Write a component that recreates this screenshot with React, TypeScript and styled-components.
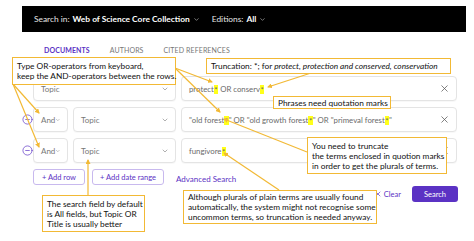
import React from 'react';
import styled, { createGlobalStyle } from 'styled-components';
import { ChevronDown, X, CircleMinus } from 'lucide-react';

const PURPLE = '#5b32c4';
const GOLD = '#f2b935';

const Global = createGlobalStyle`
  html, body { margin: 0; padding: 0; background: #fff; }
  body { font-family: Lato, "Open Sans", sans-serif; }
`;

const Page = styled.div`
  position: relative;
  width: 474px;
  height: 241px;
  overflow: hidden;
  padding-top: 6px;
  box-sizing: border-box;
  background: #fff;
`;

const TopBar = styled.div`
  margin-left: 22px;
  width: 444px;
  height: 26px;
  background: #000;
  color: #e6e6e6;
  display: flex;
  align-items: center;
  padding-left: 12px;
  box-sizing: border-box;
  font-size: 8.4px;
  gap: 12px;
  b { color: #fff; font-weight: 700; }
`;

const BarGroup = styled.span`
  display: inline-flex;
  align-items: center;
  gap: 3px;
`;

const Tabs = styled.div`
  margin-top: 11px;
  height: 14px;
  padding-left: 44px;
  display: flex;
  align-items: center;
  gap: 20px;
  font-size: 7px;
  letter-spacing: 0.1px;
`;

const Tab = styled.span<{ $active?: boolean }>`
  color: ${p => (p.$active ? PURPLE : '#777')};
  font-weight: ${p => (p.$active ? 700 : 400)};
`;

const Form = styled.div`
  margin-top: 19px;
  display: flex;
  flex-direction: column;
  gap: 6px;
`;

const Row = styled.div`
  display: flex;
  align-items: center;
  height: 25px;
  padding-left: 22px;
`;

const IconSlot = styled.div`
  width: 11px;
  display: flex;
  align-items: center;
  justify-content: center;
  color: ${PURPLE};
`;

const Fields = styled.div`
  display: flex;
  gap: 5px;
`;

const Field = styled.div<{ $w: number }>`
  width: ${p => p.$w}px;
  height: 25px;
  box-sizing: border-box;
  border: 1px solid #e4e4e4;
  border-radius: 4px;
  background: #fff;
  display: flex;
  align-items: center;
  justify-content: space-between;
  padding: 0 6px 0 7px;
  font-size: 8px;
  color: #777;
  box-shadow: 0 1px 1px rgba(0,0,0,0.03);
`;

const Query = styled.span`
  color: #6a6a6a;
  white-space: nowrap;
  font-size: 7.8px;
`;

const Mark = styled.mark`
  display: inline-block;
  background: #ffff1a;
  color: inherit;
  padding: 0 0.5px;
  height: 9px;
  line-height: 10px;
  vertical-align: -1px;
`;

const Buttons = styled.div`
  margin-top: 6px;
  padding-left: 33px;
  display: flex;
  align-items: center;
  gap: 7px;
  height: 16px;
`;

const OutlineBtn = styled.div<{ $w: number }>`
  width: ${p => p.$w}px;
  height: 16px;
  box-sizing: border-box;
  border: 1px solid #c8b9ee;
  border-radius: 3px;
  color: ${PURPLE};
  font-size: 7.5px;
  display: flex;
  align-items: center;
  justify-content: center;
  gap: 2px;
`;

const LinkText = styled.span`
  margin-left: 5px;
  color: ${PURPLE};
  font-size: 8px;
  padding-top: 3px;
`;

const Actions = styled.div`
  margin-top: 1px;
  display: flex;
  justify-content: flex-end;
  align-items: center;
  gap: 11px;
  padding-right: 16px;
  height: 16px;
`;

const ClearLink = styled.span`
  color: ${PURPLE};
  font-size: 7.5px;
  display: inline-flex;
  align-items: center;
  gap: 2px;
`;

const SearchBtn = styled.div`
  width: 46px;
  height: 16px;
  border-radius: 3px;
  background: ${PURPLE};
  color: #fff;
  font-size: 7.5px;
  display: flex;
  align-items: center;
  justify-content: center;
`;

const Lines = styled.svg`
  position: absolute;
  left: 0;
  top: 0;
  pointer-events: none;
`;

const Callout = styled.div<{ $x: number; $y: number; $w: number; $h: number }>`
  position: absolute;
  left: ${p => p.$x}px;
  top: ${p => p.$y}px;
  width: ${p => p.$w}px;
  height: ${p => p.$h}px;
  box-sizing: border-box;
  border: 1.5px solid ${GOLD};
  background: #fff;
  color: #111;
  font-family: Lato, "Open Sans", sans-serif;
  font-size: 8.3px;
  line-height: 10px;
  padding: 2px 4px;
  white-space: nowrap;
  display: flex;
  flex-direction: column;
  justify-content: center;
  i { font-style: italic; }
`;

const Chev = () => <ChevronDown size={8} strokeWidth={2} color="#888" />;

const lines: [number, number, number, number][] = [
  [13, 84, 39, 113],
  [13, 84, 39, 147],
  [175, 68, 212, 82],
  [175, 68, 220, 112],
  [311, 73, 268, 87],
  [307, 152, 224, 119],
  [279, 190, 224, 153],
  [88, 195, 88, 160],
];

export default function App() {
  return (
    <Page>
      <Global />
      <TopBar>
        <BarGroup>
          Search in: <b>Web of Science Core Collection</b>
          <ChevronDown size={7} color="#ccc" />
        </BarGroup>
        <BarGroup>
          Editions: <b>All</b>
          <ChevronDown size={7} color="#ccc" />
        </BarGroup>
      </TopBar>
      <Tabs>
        <Tab $active>DOCUMENTS</Tab>
        <Tab>AUTHORS</Tab>
        <Tab>CITED REFERENCES</Tab>
      </Tabs>
      <Form>
        <Row>
          <IconSlot />
          <Fields>
            <Field $w={143}>Topic<Chev /></Field>
            <Field $w={276}>
              <Query>protect<Mark>*</Mark> OR conserv<Mark>*</Mark></Query>
              <X size={11} color="#555" strokeWidth={1.6} />
            </Field>
          </Fields>
        </Row>
        <Row>
          <IconSlot><CircleMinus size={11} strokeWidth={1.5} /></IconSlot>
          <Fields>
            <Field $w={35}>And<Chev /></Field>
            <Field $w={103}>Topic<Chev /></Field>
            <Field $w={276}>
              <Query>"old forest<Mark>*</Mark>" OR "old growth forest<Mark>*</Mark>" OR "primeval forest<Mark>*</Mark>"</Query>
              <X size={11} color="#555" strokeWidth={1.6} />
            </Field>
          </Fields>
        </Row>
        <Row>
          <IconSlot><CircleMinus size={11} strokeWidth={1.5} /></IconSlot>
          <Fields>
            <Field $w={35}>And<Chev /></Field>
            <Field $w={103}>Topic<Chev /></Field>
            <Field $w={276}>
              <Query>fungivore<Mark>*</Mark></Query>
              <X size={11} color="#555" strokeWidth={1.6} />
            </Field>
          </Fields>
        </Row>
      </Form>
      <Buttons>
        <OutlineBtn $w={52}>+ Add row</OutlineBtn>
        <OutlineBtn $w={72}>+ Add date range</OutlineBtn>
        <LinkText>Advanced Search</LinkText>
      </Buttons>
      <Actions>
        <ClearLink><X size={8} strokeWidth={2} /> Clear</ClearLink>
        <SearchBtn>Search</SearchBtn>
      </Actions>

      <Lines width={474} height={241} viewBox="0 0 474 241">
        <defs>
          <marker id="ah" markerWidth="5" markerHeight="5" refX="4" refY="2.5" orient="auto" markerUnits="userSpaceOnUse">
            <path d="M0,0 L5,2.5 L0,5 z" fill={GOLD} />
          </marker>
        </defs>
        {lines.map(([x1, y1, x2, y2], i) => (
          <line key={i} x1={x1} y1={y1} x2={x2} y2={y2} stroke={GOLD} strokeWidth={1.2} markerEnd="url(#ah)" />
        ))}
      </Lines>

      <Callout $x={12} $y={57} $w={164} $h={28}>
        <span>Type OR-operators from keyboard,</span>
        <span>keep the AND-operators between the rows.</span>
      </Callout>
      <Callout $x={206} $y={58} $w={245} $h={16}>
        <span>Truncation: *; for <i>protect, protection and conserved, conservation</i></span>
      </Callout>
      <Callout $x={273} $y={96} $w={118} $h={13}>
        <span>Phrases need quotation marks</span>
      </Callout>
      <Callout $x={307} $y={137} $w={140} $h={37}>
        <span>You need to truncate</span>
        <span>the terms enclosed in quotion marks</span>
        <span>in order to get the plurals of terms.</span>
      </Callout>
      <Callout $x={42} $y={195} $w={103} $h={37}>
        <span>The search field by default</span>
        <span>is All fields, but Topic OR</span>
        <span>Title is usually better</span>
      </Callout>
      <Callout $x={183} $y={190} $w={194} $h={34}>
        <span>Although plurals of plain terms are usually found</span>
        <span>automatically, the system might not recognise some</span>
        <span>uncommon terms, so truncation is needed anyway.</span>
      </Callout>
    </Page>
  );
}
